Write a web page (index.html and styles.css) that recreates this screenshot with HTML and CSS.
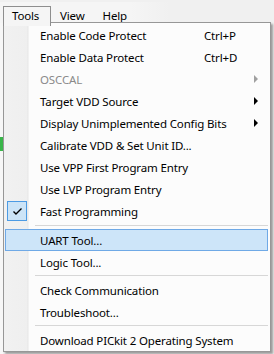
FILE: index.html
```html
<!DOCTYPE html>
<html lang="en">
  <head>
    <meta charset="UTF-8" />
    <title>Tools menu</title>
    <link rel="stylesheet" href="styles.css">
  </head>
  <body>
    <div class="menubar">
      <div class="tab open">Tools</div>
      <div class="tab">View</div>
      <div class="tab">Help</div>
    </div>
    <div class="below">
      <div class="app-edge"><div class="green"></div></div>
      <div class="menu">
        <div class="item"><span class="label">Enable Code Protect</span><span class="key">Ctrl+P</span></div>
        <div class="item"><span class="label">Enable Data Protect</span><span class="key">Ctrl+D</span></div>
        <div class="item disabled"><span class="label">OSCCAL</span><span class="arrow"></span></div>
        <div class="item"><span class="label">Target VDD Source</span><span class="arrow"></span></div>
        <div class="item"><span class="label">Display Unimplemented Config Bits</span><span class="arrow"></span></div>
        <div class="item"><span class="label">Calibrate VDD &amp; Set Unit ID...</span></div>
        <div class="item"><span class="label">Use VPP First Program Entry</span></div>
        <div class="item"><span class="label">Use LVP Program Entry</span></div>
        <div class="item">
          <span class="check">
            <svg width="9" height="7" viewBox="0 0 9 7"><path d="M0.5 3.5 L3 6 L8.5 0.5" fill="none" stroke="#000" stroke-width="1.4"/></svg>
          </span>
          <span class="label">Fast Programming</span>
        </div>
        <div class="sep first"></div>
        <div class="item hover"><span class="label">UART Tool...</span></div>
        <div class="item"><span class="label">Logic Tool...</span></div>
        <div class="sep"></div>
        <div class="item"><span class="label">Check Communication</span></div>
        <div class="item"><span class="label">Troubleshoot...</span></div>
        <div class="sep"></div>
        <div class="item"><span class="label">Download PICkit 2 Operating System</span></div>
      </div>
    </div>
  </body>
</html>
```

FILE: styles.css
```css
* {
  margin: 0px;
  padding: 0px;
  box-sizing: border-box;
}

body {
  width: 274px;
  height: 354px;
  overflow: hidden;
  background: #f0f0f0;
  font-family: "Noto Sans", "Open Sans", sans-serif;
  font-size: 11.5px;
  letter-spacing: -0.15px;
  color: #000;
}

/* Menulinjen øverst */
.menubar {
  display: flex;
  height: 23px;
  padding: 4px 0 0 3px;
  background: linear-gradient(to right, #f5f5f5 0px, #f5f5f5 130px, #f0f0f0 170px);
  border-top: 2px solid #f0f0f0;
}

.tab {
  height: 19px;
  line-height: 17px;
  padding: 0 8px 0 8px;
  border: 1px solid transparent;
  border-bottom: none;
}

.tab.open {
  position: relative;
  z-index: 2;
  width: 48px;
  background: #f5f5f5;
  border-color: #8e8e8e;
  height: 20px;
}

.below {
  display: flex;
  height: 331px;
}

.app-edge {
  width: 3px;
  background: #f7f7f7;
  padding-top: 114px;
}

.green {
  height: 14px;
  background: #39b54a;
}

/* Selve dropdown menuen */
.menu {
  width: 268px;
  height: 330px;
  margin-top: -1px;
  padding: 1px 1px 0 1px;
  border: 1px solid #979797;
  background: linear-gradient(to right, #f1f1f1 0px, #efefef 23px, #e6e6e6 24px, #fcfcfc 25px, #fcfcfc 100%);
  box-shadow: 2px 2px 2px rgba(0, 0, 0, 0.35);
}

.item {
  display: flex;
  align-items: center;
  height: 22px;
  margin: 0 1px 0 0;
  padding-left: 34px;
  padding-right: 12px;
  border: 1px solid transparent;
  position: relative;
}

.label {
  flex: 1;
  white-space: nowrap;
}

.key {
  width: 51px;
}

.disabled {
  color: #8a8a8a;
}

.arrow {
  width: 0;
  height: 0;
  margin-right: -3px;
  border-top: 4px solid transparent;
  border-bottom: 4px solid transparent;
  border-left: 4px solid #000;
}

.disabled .arrow {
  border-left-color: #a0a0a0;
}

.hover {
  background: #cde5f9;
  border-color: #6fa9e6;
}

.check {
  position: absolute;
  left: 1px;
  top: 0px;
  width: 20px;
  height: 20px;
  display: flex;
  align-items: center;
  justify-content: center;
  background: #cce4f7;
  border: 1px solid #4c9be4;
}

.sep {
  height: 6px;
  margin-left: 30px;
  margin-right: 1px;
  padding-top: 2px;
}

.sep.first {
  height: 7px;
  padding-top: 3px;
}

.sep::after {
  content: "";
  display: block;
  height: 1px;
  background: #d7d7d7;
}
```
